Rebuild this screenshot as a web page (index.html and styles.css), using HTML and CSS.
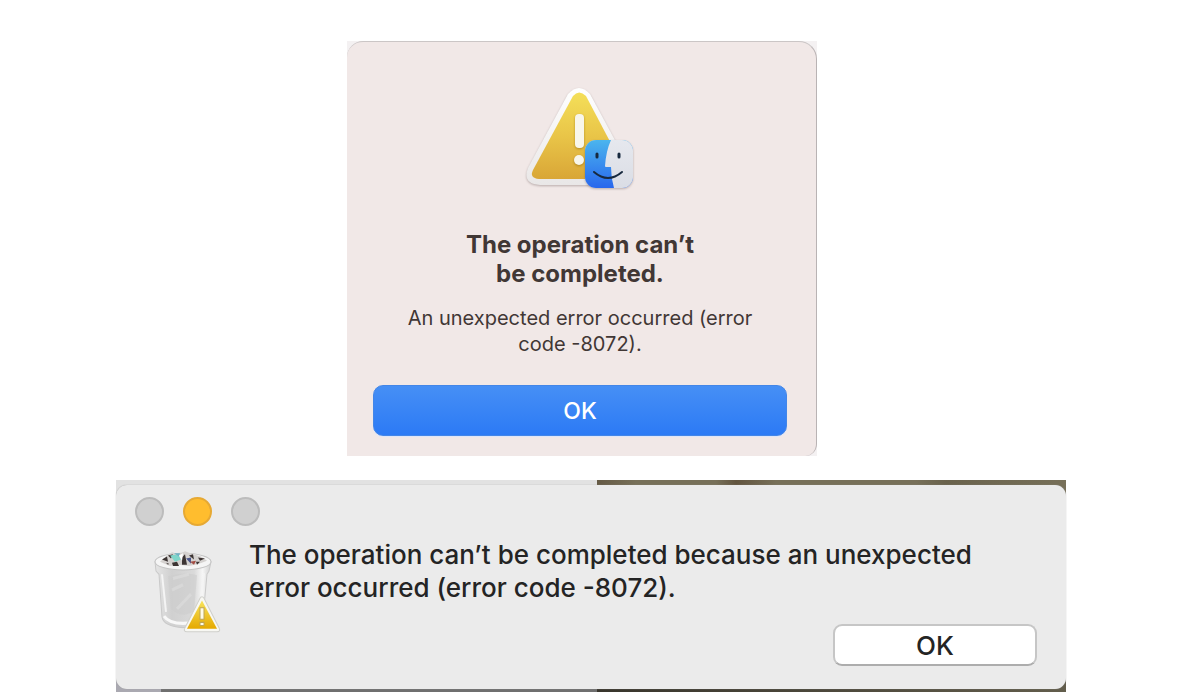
FILE: index.html
```
<!DOCTYPE html>
<html lang="en">
<head>
    <meta charset="UTF-8">
    <meta name="viewport" content="width=device-width, initial-scale=1.0">
    <title>Error code -8072</title>
    <link rel="stylesheet" href="styles.css">
</head>
<body>
<main>
    <!-- Newer style alert -->
    <div class="alert-frame">
        <section class="alert" role="alertdialog" aria-labelledby="alertTitle" aria-describedby="alertText">
            <svg class="alert-icon" viewBox="0 0 112 108" aria-hidden="true">
                <defs>
                    <linearGradient id="gold" x1="0" y1="0" x2="0" y2="1">
                        <stop offset="0" stop-color="#f4df59"/>
                        <stop offset="0.5" stop-color="#e9c548"/>
                        <stop offset="1" stop-color="#d9a637"/>
                    </linearGradient>
                    <linearGradient id="rim" x1="0" y1="0" x2="0" y2="1">
                        <stop offset="0" stop-color="#ffffff"/>
                        <stop offset="1" stop-color="#e9e7e7"/>
                    </linearGradient>
                    <linearGradient id="finderBlue" x1="0" y1="0" x2="0" y2="1">
                        <stop offset="0" stop-color="#4bb5ee"/>
                        <stop offset="1" stop-color="#2867ed"/>
                    </linearGradient>
                    <linearGradient id="finderWhite" x1="0" y1="0" x2="0" y2="1">
                        <stop offset="0" stop-color="#e6e8ee"/>
                        <stop offset="1" stop-color="#dadde5"/>
                    </linearGradient>
                    <clipPath id="faceClip">
                        <rect x="61" y="53" width="48" height="48" rx="11"/>
                    </clipPath>
                </defs>
                <path class="icon-shadow" d="M44 7Q55 -5 66 7L106 81Q112 97 94 98H16Q-2 97 4 81Z" fill="url(#rim)"/>
                <path d="M49 9Q55 2 62 9L101 83Q105 91 94 92H15Q5 91 9 83Z" fill="url(#gold)"/>
                <g class="icon-mark">
                    <rect x="51" y="27" width="9" height="34" rx="4"/>
                    <ellipse cx="55" cy="73" rx="5" ry="5"/>
                </g>
                <rect class="icon-shadow" x="61" y="53" width="48" height="48" rx="11" fill="#dadde5"/>
                <g clip-path="url(#faceClip)">
                    <rect x="61" y="53" width="48" height="48" fill="url(#finderBlue)"/>
                    <path d="M87 53Q82 64 81 79Q81 80 82 80H87Q87 91 90 101H109V53Z" fill="url(#finderWhite)"/>
                </g>
                <g class="finder-face">
                    <path d="M73 67V70"/>
                    <path d="M95 67V70"/>
                    <path d="M70 85Q84 97 98 85" stroke-width="2"/>
                </g>
            </svg>
            <h1 id="alertTitle">The operation can’t<br>be completed.</h1>
            <p id="alertText">An unexpected error occurred (error<br>code -8072).</p>
            <button type="button" class="primary-button">OK</button>
        </section>
    </div>

    <!-- Older style window over the desktop -->
    <div class="desktop">
        <section class="window" role="alertdialog" aria-labelledby="windowText">
            <div class="window-controls">
                <button type="button" class="dot" aria-label="Close" disabled></button>
                <button type="button" class="dot dot-minimize" aria-label="Minimize"></button>
                <button type="button" class="dot" aria-label="Zoom" disabled></button>
            </div>
            <div class="window-content">
                <svg class="trash-icon" viewBox="0 0 70 86" preserveAspectRatio="none" aria-hidden="true">
                    <defs>
                        <linearGradient id="bin" x1="0" y1="0" x2="1" y2="0">
                            <stop offset="0" stop-color="#e5e5e5"/>
                            <stop offset="0.3" stop-color="#d0d0d0"/>
                            <stop offset="0.7" stop-color="#dadada"/>
                            <stop offset="0.85" stop-color="#f6f6f6"/>
                            <stop offset="1" stop-color="#cfcfcf"/>
                        </linearGradient>
                        <linearGradient id="badge" x1="0" y1="0" x2="0" y2="1">
                            <stop offset="0" stop-color="#f8e45c"/>
                            <stop offset="1" stop-color="#e5a900"/>
                        </linearGradient>
                    </defs>
                    <path d="M4 15L5 24L8 27L11 68Q13 77 32 78Q50 77 52 68L56 27L58 24L60 15Z" fill="url(#bin)" stroke="#c9c9c9"/>
                    <path d="M13 67Q18 74 32 74Q45 74 50 67" fill="none" stroke="#f8f8f8" stroke-width="3"/>
                    <path d="M11 27L15 63M53 26L50 48" fill="none" stroke="#f4f4f4" stroke-width="2"/>
                    <path d="M17 29Q34 24 46 28L43 62Q30 70 20 60Z" fill="#cdcdcd" opacity="0.6"/>
                    <path d="M22 31L38 27M21 42L32 37M26 60L40 46" fill="none" stroke="#dedede" stroke-width="3" opacity="0.6"/>
                    <ellipse cx="32" cy="15" rx="28" ry="8" fill="#f5f5f5" stroke="#c4c4c4"/>
                    <path d="M9 15L15 10L21 6L28 8L34 5L42 8L50 10L56 14L48 17L38 19L28 18L19 19Z" fill="#d5d2d0"/>
                    <path d="M11 13L16 10L17 15ZM17 9L22 8L20 12ZM21 16L26 15L28 19L22 19ZM31 11L34 8L36 18L31 18ZM38 9L42 8L43 13ZM47 11L54 12L49 14ZM45 15L49 15L46 18ZM15 16L18 17L17 18Z" fill="#3d3534"/>
                    <path d="M19 9L27 8L30 13L24 15Z" fill="#80d6ca"/>
                    <path d="M23 7L29 7L28 10Z" fill="#6eb3c5"/>
                    <path d="M35 12L40 11L40 17Z" fill="#4b568a"/>
                    <path d="M39 15L45 14L43 18Z" fill="#a34d44"/>
                    <path d="M28 9L32 7L31 14Z" fill="#fff"/>
                    <path d="M49 50Q51 47 53 50L68 78Q70 82 66 82H36Q32 82 34 78Z" fill="#f8f8f3" stroke="#cfcfcb"/>
                    <path d="M51 52L66 79H36Z" fill="url(#badge)"/>
                    <path d="M49 59H53V70H49ZM49 73H53V76H49Z" fill="#fffce7" stroke="#bda455" stroke-width="1"/>
                </svg>
                <p id="windowText">The operation can’t be completed because an unexpected error occurred (error code -8072).</p>
                <button type="button" class="default-button">OK</button>
            </div>
        </section>
    </div>
</main>
</body>
</html>
```

FILE: styles.css
```
* {
    box-sizing: border-box;
}

body {
    font-family: Inter, 'Liberation Sans', sans-serif;
    margin: 0;
    background: white;
    color: #413735;
}

main {
    display: flex;
    flex-direction: column;
    align-items: center;
    gap: 24px;
    padding: 41px 18px 0 0;
}

h1,
p {
    margin: 0;
}

button {
    font-family: inherit;
    font-weight: 500;
    padding: 0;
}

/* Newer alert */
.alert-frame {
    width: 100%;
    max-width: 470px;
    margin-right: 18px;
    background: #f4f1f2;
}

.alert {
    display: flex;
    flex-direction: column;
    align-items: center;
    padding: 45px 29px 20px 26px;
    background: #f1e8e7;
    border-top: 1px solid #cbc6c6;
    border-right: 1px solid #b9b3b4;
    border-radius: 16px 18px 12px 0;
    text-align: center;
}

.alert-icon {
    width: 112px;
    height: 108px;
    overflow: visible;
}

.icon-shadow {
    filter: drop-shadow(0 1px 1px rgba(80, 60, 60, 0.35));
}

.icon-mark {
    fill: #f8f6ea;
    filter: drop-shadow(0 1px 1px rgba(130, 90, 0, 0.5));
}

.finder-face {
    fill: none;
    stroke: #17293e;
    stroke-width: 3;
    stroke-linecap: round;
}

.alert h1 {
    margin-top: 35px;
    font-size: 24px;
    line-height: 29px;
    font-weight: 700;
}

.alert p {
    margin-top: 17px;
    font-size: 20px;
    line-height: 26px;
}

.primary-button {
    width: 100%;
    height: 51px;
    margin-top: 28px;
    border: 1px solid #4386e8;
    border-radius: 10px;
    background: linear-gradient(to bottom, #468ff5, #2c7af5);
    box-shadow: 0 1px 1px #dce5fa;
    color: white;
    font-size: 23px;
}

/* Older window */
.desktop {
    width: 100%;
    max-width: 950px;
    padding: 5px 0 3px;
    background:
        linear-gradient(to right, #e2e2e2 481px, #655a45 481px, #777059 520px, #777059 600px, #62553f 620px, #777059 660px, #777059 800px, #6a634d 830px, #777059) top / 100% 20px no-repeat,
        linear-gradient(to right, #aaa9b1 45px, #6f6f6f 45px, #6f6f6f 481px, #38352c 481px, #625d4c) bottom / 100% 20px no-repeat;
}

.window {
    padding: 12px 29px 23px 19px;
    background: #ebebeb;
    border-radius: 11px;
    box-shadow: 0 0 1px #999;
    color: #242424;
}

.window-controls {
    display: flex;
    gap: 19px;
}

.dot {
    width: 29px;
    height: 29px;
    border: 2px solid #bcbcbc;
    border-radius: 50%;
    background: #d0d0d0;
}

.dot-minimize {
    border-color: #e6a934;
    background: #ffbd2e;
}

.window-content {
    display: grid;
    grid-template-columns: 70px 1fr;
    gap: 20px 28px;
    padding: 12px 0 0 16px;
}

.trash-icon {
    grid-row: span 2;
    width: 70px;
    height: 90px;
    margin-top: 8px;
    overflow: visible;
}

.window-content p {
    max-width: 740px;
    font-size: 26px;
    line-height: 33px;
    font-weight: 500;
}

.default-button {
    justify-self: end;
    width: 204px;
    height: 42px;
    border: 2px solid #c6c6c6;
    border-bottom-color: #adadad;
    border-radius: 9px;
    background: white;
    color: #242424;
    font-size: 26px;
}
```
